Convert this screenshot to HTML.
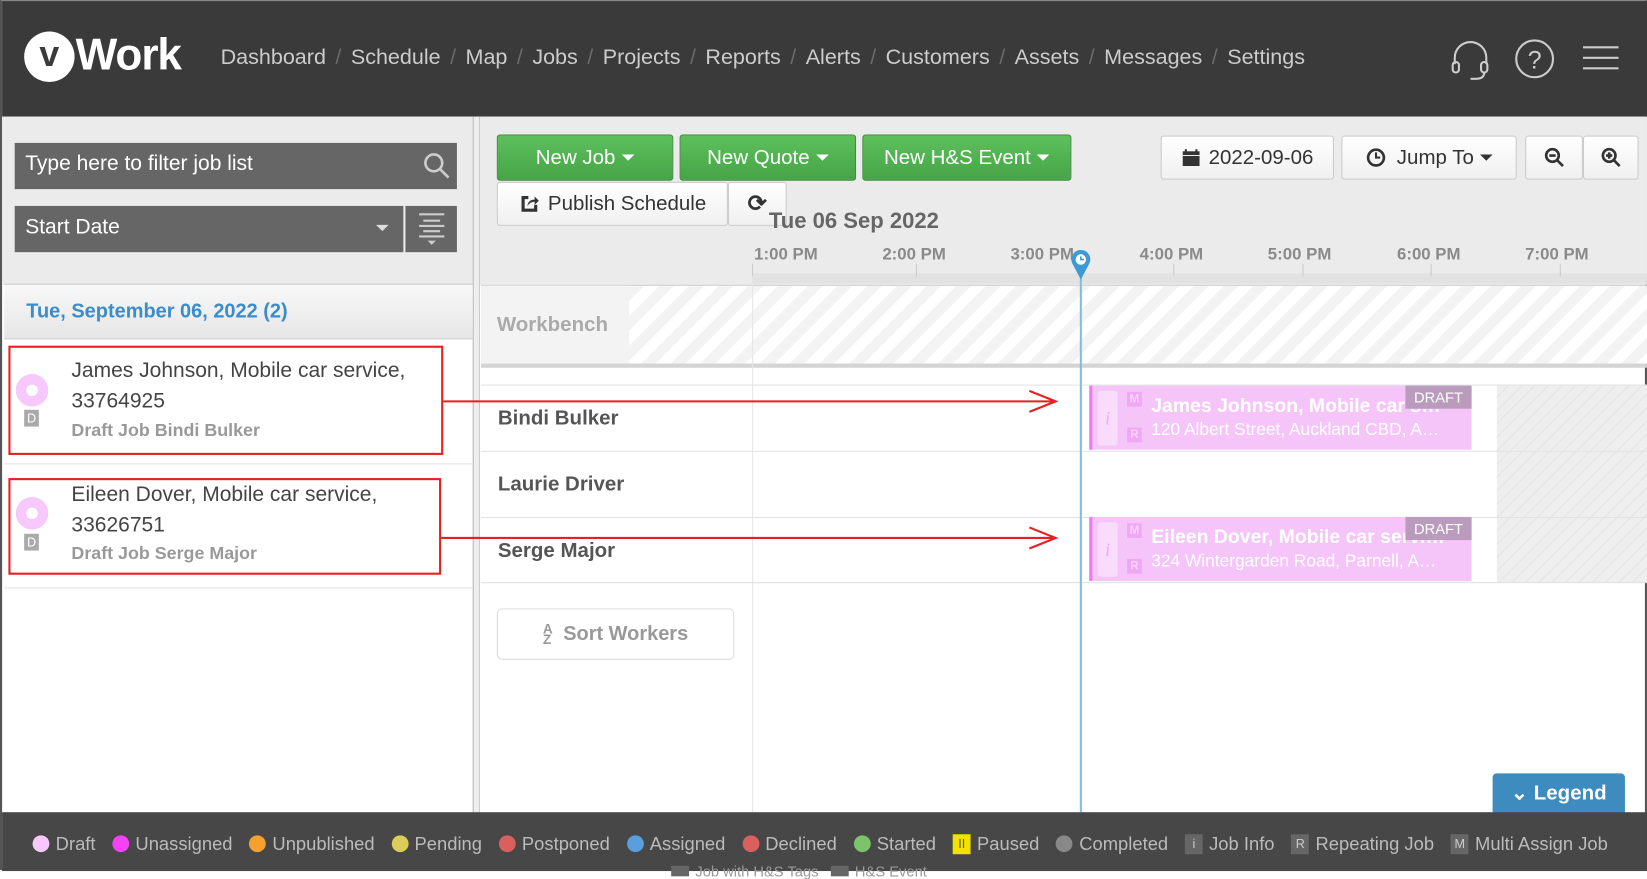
<!DOCTYPE html>
<html><head><meta charset="utf-8"><style>
*{box-sizing:border-box;margin:0;padding:0}
html,body{width:1647px;height:870px;overflow:hidden;background:#fff;font-family:"Liberation Sans",sans-serif}
#w{position:absolute;left:0;top:0;width:1568px;height:828px;transform:scale(1.05038,1.05072);transform-origin:0 0;border:2px solid #555;border-top:1px solid #888}
.a{position:absolute}
.hdr{left:0;top:0;width:1566px;height:110px;background:#3a3a3a}
.nav{left:208px;top:42px;font-size:20.5px;color:#ccc;white-space:nowrap}
.nav i{font-style:normal;color:#6a6a6a;margin:0 9px}
.btn{position:absolute;border-radius:3px;font-size:19.5px;display:flex;align-items:center;justify-content:center;white-space:nowrap}
.g{background:linear-gradient(#5cc05c,#47a447);color:#fff;border:1px solid #3d8b3d}
.w{background:linear-gradient(#fff,#f0f0f0);color:#333;border:1px solid #ccc}
.car{display:inline-block;width:0;height:0;border-left:6px solid transparent;border-right:6px solid transparent;border-top:6px solid currentColor;margin-left:6px;vertical-align:middle}
.tm{top:233px;font-size:16px;font-weight:bold;color:#8a8a8a}
.tk{top:250px;width:1px;height:12px;background:#ccc}
.hl{height:1px;background:#e2e2e2}
.wk{font-size:19.5px;font-weight:bold;color:#555;left:472px}
.job{background:#f5c5f9;border-left:3px solid #e87ef3;height:61px;width:364px;left:1035px}
.job .t{position:absolute;left:56px;top:8px;color:#fff;font-weight:bold;font-size:18.5px;white-space:nowrap}
.job .s{position:absolute;left:56px;top:33px;color:#fff;font-size:16.5px;white-space:nowrap}
.job .dr{position:absolute;right:0;top:0;width:63px;height:22px;background:#ba9bbe;color:#fff;font-size:14px;text-align:center;line-height:22px}
.job .ii{position:absolute;left:5px;top:5px;width:19px;height:52px;background:#f9dcfc;border-radius:3px;color:#eab0f0;font-style:italic;font-family:"Liberation Serif";text-align:center;line-height:52px;font-size:18px}
.job .m{position:absolute;left:33px;width:14px;height:14px;background:#f0a8f6;color:#f8d4fb;font-size:11px;text-align:center;line-height:14px;font-weight:bold}
.hatch{background:repeating-linear-gradient(135deg,#f3f3f3 0 10px,#fff 10px 20px)}
.ft{left:0;top:772px;width:1566px;height:56px;background:#474747;font-size:17.5px;color:#bbb;white-space:nowrap}
.fr{position:absolute;left:29px;top:19px;display:flex;align-items:center;height:22px}
.fr span{display:flex;align-items:center;margin-right:16px}
.dot{display:inline-block;width:16px;height:16px;border-radius:50%;margin-right:6px}
.sq{display:inline-block;width:17px;height:19px;background:#666;color:#ccc;font-size:12px;text-align:center;line-height:19px;margin-right:6px;font-style:normal}
</style></head><body><div id="w">
<div class="a hdr"></div>
<div class="a" style="left:21px;top:29px;width:48px;height:48px;border-radius:50%;background:#fff;color:#3a3a3a;font-weight:bold;font-size:34px;text-align:center;line-height:44px">v</div>
<div class="a" style="left:70px;top:27px;color:#fff;font-weight:bold;font-size:42px;letter-spacing:-1px">Work</div>
<div class="a nav">Dashboard<i>/</i>Schedule<i>/</i>Map<i>/</i>Jobs<i>/</i>Projects<i>/</i>Reports<i>/</i>Alerts<i>/</i>Customers<i>/</i>Assets<i>/</i>Messages<i>/</i>Settings</div>
<svg class="a" style="left:1378px;top:36px" width="40" height="40" viewBox="0 0 40 40" fill="none" stroke="#ccc" stroke-width="2"><path d="M5 24V18a15 15 0 0 1 30 0v6"/><rect x="3" y="22" width="6" height="10" rx="3"/><rect x="30" y="22" width="6" height="10" rx="3"/><path d="M33 32q0 6-8 6h-5"/></svg>
<svg class="a" style="left:1439px;top:36px" width="40" height="40" viewBox="0 0 40 40"><circle cx="20" cy="19" r="17.5" fill="none" stroke="#ccc" stroke-width="2"/><text x="20" y="28" font-size="24" fill="#ccc" text-anchor="middle" font-family="Liberation Sans">?</text></svg>
<svg class="a" style="left:1505px;top:42px" width="34" height="24"><path d="M0 2H34M0 12H34M0 22H34" stroke="#ccc" stroke-width="2"/></svg>

<div class="a" style="left:0;top:110px;width:1566px;height:160px;background:#ebebeb"></div>
<div class="a" style="left:448px;top:110px;width:7px;height:662px;background:#eee;border-left:1px solid #bbb;border-right:1px solid #ccc"></div>
<div class="a" style="left:12px;top:135px;width:421px;height:44px;background:#666;color:#fff;font-size:20px;padding:9px 10px">Type here to filter job list</div>
<svg class="a" style="left:400px;top:143px" width="28" height="28" fill="none" stroke="#ccc" stroke-width="2.5"><circle cx="11" cy="11" r="8"/><path d="M17 17l8 8"/></svg>
<div class="a" style="left:12px;top:195px;width:370px;height:44px;background:#666;color:#fff;font-size:20px;padding:9px 10px">Start Date</div>
<div class="a" style="left:356px;top:213px;border-left:6px solid transparent;border-right:6px solid transparent;border-top:6px solid #ddd"></div>
<div class="a" style="left:384px;top:195px;width:49px;height:44px;background:#666"></div>
<svg class="a" style="left:396px;top:200px" width="26" height="34" stroke="#ccc" stroke-width="2"><path d="M1 3H25M5 9H21M1 14H25M5 19H21M1 24H25"/><path d="M9 28h8l-4 4z" fill="#ccc" stroke="none"/></svg>

<div class="a" style="left:2px;top:269px;width:446px;height:53px;background:linear-gradient(#f8f8f8,#e6e6e6);border-top:1px solid #ccc;border-bottom:1px solid #ccc"></div>
<div class="a" style="left:23px;top:285px;color:#3a8ccb;font-weight:bold;font-size:19px">Tue, September 06, 2022 (2)</div>
<div class="a hl" style="left:2px;top:440px;width:446px"></div>
<div class="a hl" style="left:2px;top:558px;width:446px"></div>
<div class="a" style="left:13px;top:355px;width:31px;height:31px;border-radius:50%;background:#f6c8fb"></div><div class="a" style="left:23px;top:365px;width:11px;height:11px;border-radius:50%;background:#fff"></div>
<div class="a" style="left:21px;top:389px;width:14px;height:16px;background:#aaa;color:#fff;font-size:12px;text-align:center;line-height:16px">D</div>
<div class="a" style="left:66px;top:338px;font-size:20px;color:#444;line-height:29px">James Johnson, Mobile car service,<br>33764925</div>
<div class="a" style="left:66px;top:399px;font-size:17px;color:#999;font-weight:bold">Draft Job Bindi Bulker</div>
<div class="a" style="left:13px;top:472px;width:31px;height:31px;border-radius:50%;background:#f6c8fb"></div><div class="a" style="left:23px;top:482px;width:11px;height:11px;border-radius:50%;background:#fff"></div>
<div class="a" style="left:21px;top:507px;width:14px;height:16px;background:#aaa;color:#fff;font-size:12px;text-align:center;line-height:16px">D</div>
<div class="a" style="left:66px;top:456px;font-size:20px;color:#444;line-height:29px">Eileen Dover, Mobile car service,<br>33626751</div>
<div class="a" style="left:66px;top:516px;font-size:17px;color:#999;font-weight:bold">Draft Job Serge Major</div>

<div class="btn g" style="left:471px;top:127px;width:168px;height:44px">New Job<span class="car"></span></div>
<div class="btn g" style="left:645px;top:127px;width:168px;height:44px">New Quote<span class="car"></span></div>
<div class="btn g" style="left:819px;top:127px;width:199px;height:44px">New H&amp;S Event<span class="car"></span></div>
<div class="btn w" style="left:471px;top:172px;width:220px;height:42px"><svg width="20" height="20" style="margin-right:8px"><path d="M9 4H4v12h12v-5" fill="none" stroke="#333" stroke-width="3"/><path d="M8 12q1-6 7-6V3l4 4-4 4V8q-4 0-7 4z" fill="#333"/></svg>Publish Schedule</div>
<div class="btn w" style="left:691px;top:172px;width:56px;height:42px;font-size:22px;font-weight:bold">⟳</div>
<div class="btn w" style="left:1103px;top:128px;width:165px;height:42px"><svg width="18" height="18" style="margin-right:8px"><rect x="1" y="3" width="16" height="14" fill="#333"/><path d="M4 1v4M14 1v4" stroke="#333" stroke-width="2"/><path d="M1 7H17" stroke="#eee"/></svg>2022-09-06</div>
<div class="btn w" style="left:1275px;top:128px;width:167px;height:42px"><svg width="20" height="20" style="margin-right:10px"><circle cx="10" cy="10" r="7.5" fill="none" stroke="#333" stroke-width="2.5"/><path d="M10 5v5h4" fill="none" stroke="#333" stroke-width="2"/></svg>Jump To<span class="car" style="color:#333"></span></div>
<div class="btn w" style="left:1450px;top:128px;width:55px;height:42px"><svg width="20" height="20"><circle cx="8" cy="8" r="6" fill="none" stroke="#333" stroke-width="2.5"/><path d="M12 12l6 6M5 8h6" stroke="#333" stroke-width="2.5"/></svg></div>
<div class="btn w" style="left:1505px;top:128px;width:53px;height:42px"><svg width="20" height="20"><circle cx="8" cy="8" r="6" fill="none" stroke="#333" stroke-width="2.5"/><path d="M12 12l6 6M5 8h6M8 5v6" stroke="#333" stroke-width="2.5"/></svg></div>
<div class="a" style="left:730px;top:198px;font-size:21px;font-weight:bold;color:#666">Tue 06 Sep 2022</div>
<div class="a tm" style="left:716px">1:00 PM</div><div class="a tm" style="left:838px">2:00 PM</div><div class="a tm" style="left:960px">3:00 PM</div><div class="a tm" style="left:1083px">4:00 PM</div><div class="a tm" style="left:1205px">5:00 PM</div><div class="a tm" style="left:1328px">6:00 PM</div><div class="a tm" style="left:1450px">7:00 PM</div>
<div class="a" style="left:714px;top:259px;width:852px;height:10px;background:#e2e2e2"></div>
<div class="a tk" style="left:714px"></div><div class="a tk" style="left:870px"></div><div class="a tk" style="left:1115px"></div><div class="a tk" style="left:1238px"></div><div class="a tk" style="left:1360px"></div><div class="a tk" style="left:1483px"></div>

<div class="a hatch" style="left:456px;top:270px;width:1110px;height:75px;border-top:1px solid #ccc"></div>
<div class="a" style="left:456px;top:271px;width:141px;height:74px;background:#f3f3f3"></div>
<div class="a" style="left:471px;top:297px;font-size:19.5px;font-weight:bold;color:#aaa">Workbench</div>
<div class="a" style="left:456px;top:345px;width:1110px;height:4px;background:#d4d4d4"></div>
<div class="a" style="left:714px;top:270px;width:1px;height:502px;background:#e6e6e6"></div>
<div class="a hatch" style="left:1423px;top:365px;width:143px;height:188px;background:repeating-linear-gradient(135deg,#eee 0 8px,#e4e4e4 8px 9px)"></div>
<div class="a hl" style="left:456px;top:365px;width:1110px"></div>
<div class="a hl" style="left:456px;top:428px;width:1110px"></div>
<div class="a hl" style="left:456px;top:491px;width:1110px"></div>
<div class="a hl" style="left:456px;top:553px;width:1110px"></div>
<div class="a wk" style="top:386px">Bindi Bulker</div>
<div class="a wk" style="top:449px">Laurie Driver</div>
<div class="a wk" style="top:512px">Serge Major</div>
<div class="a job" style="top:366px"><div class="ii">i</div><div class="m" style="top:6px">M</div><div class="m" style="top:40px">R</div><div class="t">James Johnson, Mobile car s…</div><div class="s">120 Albert Street, Auckland CBD, A…</div><div class="dr">DRAFT</div></div>
<div class="a job" style="top:491px"><div class="ii">i</div><div class="m" style="top:6px">M</div><div class="m" style="top:40px">R</div><div class="t">Eileen Dover, Mobile car servi…</div><div class="s">324 Wintergarden Road, Parnell, A…</div><div class="dr">DRAFT</div></div>
<div class="a" style="left:1026px;top:245px;width:2px;height:527px;background:#7cc0e6"></div>
<svg class="a" style="left:1017px;top:236px" width="20" height="30"><path d="M10 29L2 14a9 9 0 1 1 16 0z" fill="#3d9ad6"/><circle cx="10" cy="10" r="5" fill="#fff"/><path d="M10 7v3h3" stroke="#3d9ad6" stroke-width="1.5" fill="none"/></svg>
<div class="btn" style="left:471px;top:578px;width:226px;height:49px;border:1px solid #ddd;color:#999;font-weight:bold;font-size:19px;border-radius:5px"><span style="font-size:13px;margin-right:10px;line-height:10px">A<br>Z</span>Sort Workers</div>

<div class="a" style="left:6px;top:328px;width:414px;height:104px;border:2px solid #e52020"></div>
<div class="a" style="left:6px;top:454px;width:412px;height:92px;border:2px solid #e52020"></div>
<svg class="a" style="left:415px;top:365px" width="600" height="160"><path d="M5 16H585M563 6l25 10-25 10M3 146H585M563 136l25 10-25 10" fill="none" stroke="#e52020" stroke-width="2"/></svg>

<div class="btn" style="left:1419px;top:735px;width:126px;height:38px;background:#3e8bc0;color:#fff;font-weight:bold;font-size:19.5px;border-radius:4px 4px 0 0">⌄&nbsp;Legend</div>
<div class="a ft"><div class="fr">
<span><i class="dot" style="background:#f6c8fb"></i>Draft</span><span><i class="dot" style="background:#f542f5"></i>Unassigned</span><span><i class="dot" style="background:#f5a030"></i>Unpublished</span><span><i class="dot" style="background:#dccc5a"></i>Pending</span><span><i class="dot" style="background:#d9605e"></i>Postponed</span><span><i class="dot" style="background:#5a9fdc"></i>Assigned</span><span><i class="dot" style="background:#d9605e"></i>Declined</span><span><i class="dot" style="background:#7ac46a"></i>Started</span><span><i class="sq" style="background:#f2e200;color:#555">II</i>Paused</span><span><i class="dot" style="background:#888"></i>Completed</span><span><i class="sq">i</i>Job Info</span><span><i class="sq">R</i>Repeating Job</span><span><i class="sq">M</i>Multi Assign Job</span></div>
<div style="position:absolute;left:637px;top:48px;font-size:14px;color:#999"><i class="sq" style="height:10px"></i>Job with H&amp;S Tags &nbsp; <i class="sq" style="height:10px"></i>H&amp;S Event</div></div>
</div></body></html>
